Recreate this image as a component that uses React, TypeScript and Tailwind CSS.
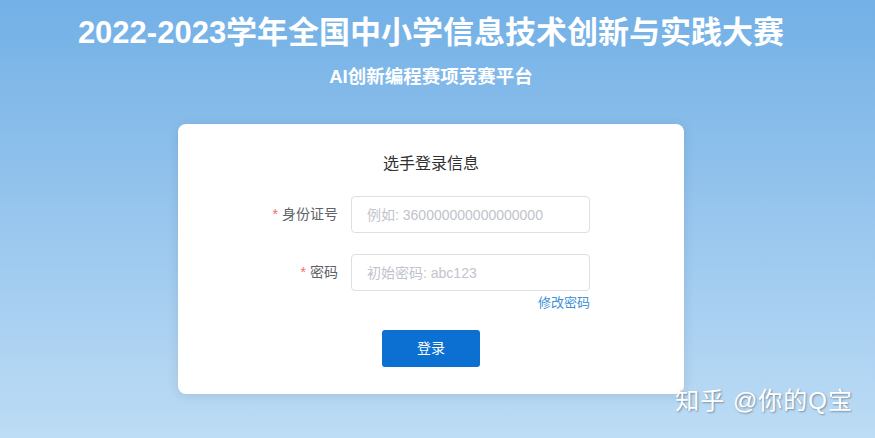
import React from 'react';

const font = { fontFamily: '"Liberation Sans", "Noto Sans CJK SC", sans-serif' };

const Field = ({ label, placeholder }: { label: string; placeholder: string }) => (
  <div className="flex items-center">
    <div className="w-[173px] pr-[13px] text-right text-[14px] text-[#606266]">
      <span className="mr-1 text-[#f56c6c]">*</span>
      {label}
    </div>
    <input
      placeholder={placeholder}
      className="h-[37px] w-[239px] rounded-[4px] border border-[#dcdfe6] bg-white px-[15px] text-[14px] text-[#606266] outline-none placeholder:text-[#c0c4cc]"
    />
  </div>
);

const App = () => {
  return (
    <div
      className="relative flex h-[438px] w-[875px] flex-col items-center overflow-hidden bg-gradient-to-b from-[#72b0e6] to-[#bddcf5] pr-[13px]"
      style={font}
    >
      <h1 className="mt-[13px] text-[31px] font-bold leading-[40px] text-white">
        2022-2023学年全国中小学信息技术创新与实践大赛
      </h1>
      <h2 className="mt-[12px] text-[18.5px] font-bold leading-[24px] text-white">AI创新编程赛项竞赛平台</h2>

      <div className="mt-[35px] flex w-[506px] flex-col rounded-[8px] bg-white pb-[27px] pt-[28px] shadow-[0_2px_12px_rgba(0,0,0,0.1)]">
        <div className="text-center text-[16px] leading-[24px] text-[#303133]">选手登录信息</div>
        <div className="mt-[20px] flex flex-col gap-[21px]">
          <Field label="身份证号" placeholder="例如: 360000000000000000" />
          <Field label="密码" placeholder="初始密码: abc123" />
        </div>
        <div className="ml-[173px] mt-[2px] w-[239px] text-right text-[13px] leading-[20px] text-[#3d8fd8]">修改密码</div>
        <div className="mt-[17px] flex justify-center">
          <button className="h-[37px] w-[98px] rounded-[3px] bg-[#0b70d1] text-[14px] text-white">登录</button>
        </div>
      </div>

      <div className="absolute bottom-[19px] right-[22px] text-[24px] tracking-[1px] text-white [text-shadow:1px_1px_2px_rgba(0,0,0,0.35)]">
        知乎 @你的Q宝
      </div>
    </div>
  );
};

export default App;
